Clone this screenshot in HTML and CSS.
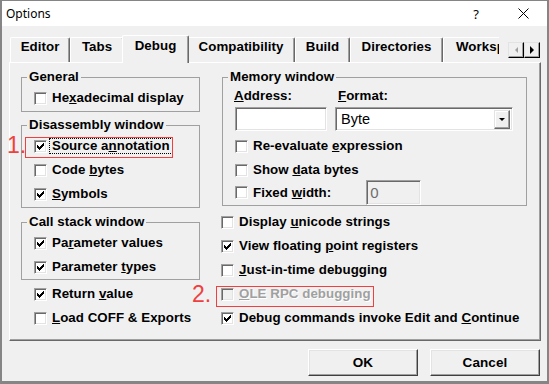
FILE: index.html
```html
<!DOCTYPE html>
<html>
<head>
<meta charset="utf-8">
<title>Options</title>
<link rel="stylesheet" href="styles.css">
</head>
<body>
<div class="dialog">
  <div class="titlebar">
    <span class="title">Options</span>
    <span class="cap-btn help">?</span>
    <span class="cap-btn close"><svg width="11" height="11" viewBox="0 0 11 11"><path d="M0.5 0.5L10.5 10.5M10.5 0.5L0.5 10.5" stroke="#000" stroke-width="1" fill="none"/></svg></span>
  </div>

  <div class="tabrow">
    <div class="tabstrip">
      <div class="tab t-editor">Editor</div>
      <div class="tab t-tabs">Tabs</div>
      <div class="tab t-debug active">Debug</div>
      <div class="tab t-compat">Compatibility</div>
      <div class="tab t-build">Build</div>
      <div class="tab t-dirs">Directories</div>
      <div class="tab t-works">Workspace</div>
    </div>
    <div class="spin">
      <span class="spin-btn"><span class="arrow-left"></span></span>
      <span class="spin-btn"><span class="arrow-right"></span></span>
    </div>
  </div>

  <div class="panel">
    <div class="col col-left">
      <fieldset class="group g-general">
        <legend>General</legend>
        <div class="row"><span class="cb"></span><span class="txt">He<u>x</u>adecimal display</span></div>
      </fieldset>

      <fieldset class="group g-disasm">
        <legend>Disassembly window</legend>
        <div class="row marked">
          <span class="mark-num num-1">1.</span>
          <span class="mark-box box-1"></span>
          <span class="cb checked"><svg class="chk" width="11" height="11" viewBox="0 0 11 11"><path d="M2 4h1v3H2zM3 5h1v3H3zM4 6h1v3H4zM5 5h1v3H5zM6 4h1v3H6zM7 3h1v3H7zM8 2h1v3H8z" fill="#000"/></svg></span>
          <span class="txt focus">Source a<u>n</u>notation</span>
        </div>
        <div class="row"><span class="cb"></span><span class="txt">Code <u>b</u>ytes</span></div>
        <div class="row"><span class="cb checked"><svg class="chk" width="11" height="11" viewBox="0 0 11 11"><path d="M2 4h1v3H2zM3 5h1v3H3zM4 6h1v3H4zM5 5h1v3H5zM6 4h1v3H6zM7 3h1v3H7zM8 2h1v3H8z" fill="#000"/></svg></span><span class="txt"><u>S</u>ymbols</span></div>
      </fieldset>

      <fieldset class="group g-stack">
        <legend>Call stack window</legend>
        <div class="row"><span class="cb checked"><svg class="chk" width="11" height="11" viewBox="0 0 11 11"><path d="M2 4h1v3H2zM3 5h1v3H3zM4 6h1v3H4zM5 5h1v3H5zM6 4h1v3H6zM7 3h1v3H7zM8 2h1v3H8z" fill="#000"/></svg></span><span class="txt">Pa<u>r</u>ameter values</span></div>
        <div class="row"><span class="cb checked"><svg class="chk" width="11" height="11" viewBox="0 0 11 11"><path d="M2 4h1v3H2zM3 5h1v3H3zM4 6h1v3H4zM5 5h1v3H5zM6 4h1v3H6zM7 3h1v3H7zM8 2h1v3H8z" fill="#000"/></svg></span><span class="txt">Parameter <u>t</u>ypes</span></div>
      </fieldset>

      <div class="loose">
        <div class="row"><span class="cb checked"><svg class="chk" width="11" height="11" viewBox="0 0 11 11"><path d="M2 4h1v3H2zM3 5h1v3H3zM4 6h1v3H4zM5 5h1v3H5zM6 4h1v3H6zM7 3h1v3H7zM8 2h1v3H8z" fill="#000"/></svg></span><span class="txt">Return <u>v</u>alue</span></div>
        <div class="row"><span class="cb"></span><span class="txt"><u>L</u>oad COFF &amp; Exports</span></div>
      </div>
    </div>

    <div class="col col-right">
      <fieldset class="group g-memory">
        <legend>Memory window</legend>
        <div class="mem-grid">
          <span class="lbl"><u>A</u>ddress:</span>
          <span class="lbl lbl-format"><u>F</u>ormat:</span>
          <span class="edit"></span>
          <span class="combo"><span class="combo-text">Byte</span><span class="combo-btn"><span class="arrow-down"></span></span></span>
        </div>
        <div class="row r-tight"><span class="cb"></span><span class="txt">Re-evaluate <u>e</u>xpression</span></div>
        <div class="row r-tight"><span class="cb"></span><span class="txt">Show <u>d</u>ata bytes</span></div>
        <div class="row r-fixed"><span class="cb"></span><span class="txt">Fixed <u>w</u>idth:</span><span class="edit edit-disabled">0</span></div>
      </fieldset>

      <div class="loose loose-right">
        <div class="row"><span class="cb"></span><span class="txt">Display <u>u</u>nicode strings</span></div>
        <div class="row"><span class="cb checked"><svg class="chk" width="11" height="11" viewBox="0 0 11 11"><path d="M2 4h1v3H2zM3 5h1v3H3zM4 6h1v3H4zM5 5h1v3H5zM6 4h1v3H6zM7 3h1v3H7zM8 2h1v3H8z" fill="#000"/></svg></span><span class="txt">View floating <u>p</u>oint registers</span></div>
        <div class="row"><span class="cb"></span><span class="txt"><u>J</u>ust-in-time debugging</span></div>
        <div class="row marked">
          <span class="mark-num num-2">2.</span>
          <span class="mark-box box-2"></span>
          <span class="cb disabled"></span><span class="txt txt-disabled"><u>O</u>LE RPC debugging</span>
        </div>
        <div class="row"><span class="cb checked"><svg class="chk" width="11" height="11" viewBox="0 0 11 11"><path d="M2 4h1v3H2zM3 5h1v3H3zM4 6h1v3H4zM5 5h1v3H5zM6 4h1v3H6zM7 3h1v3H7zM8 2h1v3H8z" fill="#000"/></svg></span><span class="txt">Debug commands invoke Edit and <u>C</u>ontinue</span></div>
      </div>
    </div>
  </div>

  <div class="btnrow">
    <button class="btn">OK</button>
    <button class="btn">Cancel</button>
  </div>
</div>
</body>
</html>
```

FILE: styles.css
```css
* { box-sizing: border-box; }

body {
  margin: 0;
  background: #ffffff;
  font-family: "Liberation Sans", Arial, sans-serif;
  color: #000;
}

.dialog {
  width: 549px;
  height: 384px;
  border: 2px solid #858585;
  border-top-width: 1px;
  border-bottom-width: 3px;
  background: #f0f0f0;
  display: flex;
  flex-direction: column;
}

/* ---------- title bar ---------- */
.titlebar {
  flex: none;
  height: 25px;
  background: #ffffff;
  display: flex;
  align-items: center;
  font-family: "Noto Sans", sans-serif;
  font-size: 12px;
}
.title { padding-left: 4px; line-height: 16px; }
.cap-btn {
  height: 25px;
  width: 46px;
  display: flex;
  align-items: center;
  justify-content: center;
}
.help { margin-left: auto; font-size: 13px; }
.close { width: 48px; }

/* ---------- tabs ---------- */
.tabrow {
  flex: none;
  display: flex;
  margin-top: 9px;
  height: 28px;
  position: relative;
  z-index: 2;
}
.tabstrip {
  display: flex;
  align-items: flex-end;
  width: 489px;
  height: 28px;
  margin-left: 8px;
  overflow: hidden;
}
.tab {
  flex: none;
  height: 25px;
  margin-bottom: 1px;
  border-top: 1px solid #ffffff;
  border-left: 1px solid #ffffff;
  border-right: 1px solid #696969;
  box-shadow: inset -1px 0 #a0a0a0;
  border-radius: 2px 2px 0 0;
  background: #f0f0f0;
  font-size: 13.3px;
  font-weight: bold;
  letter-spacing: 0.05px;
  line-height: 14px;
  padding-top: 2px;
  text-align: center;
  white-space: nowrap;
}
.t-editor { width: 60px; }
.t-tabs { width: 54px; }
.t-debug { width: 63px; }
.t-compat { width: 108px; }
.t-build { width: 55px; }
.t-dirs { width: 93px; }
.t-works { width: 80px; text-align: left; padding-left: 12px; }
.tab.active {
  width: 67px;
  height: 28px;
  margin: 0 -2px;
  padding-top: 3px;
  position: relative;
  z-index: 3;
}

.spin {
  display: flex;
  margin-left: 9px;
  margin-top: 7px;
  height: 16px;
}
.spin-btn {
  width: 16px;
  height: 16px;
  border: 1px solid;
  border-color: #e3e3e3 #000 #000 #e3e3e3;
  box-shadow: inset -1px -1px #a0a0a0;
  background: #f0f0f0;
  display: flex;
  align-items: center;
  justify-content: center;
}
.arrow-left {
  width: 0; height: 0;
  border-top: 3px solid transparent;
  border-bottom: 3px solid transparent;
  border-right: 3px solid #a0a0a0;
}
.arrow-right {
  width: 0; height: 0;
  border-top: 4px solid transparent;
  border-bottom: 4px solid transparent;
  border-left: 4px solid #000;
}

/* ---------- panel ---------- */
.panel {
  flex: none;
  margin: -1px 6px 0 7px;
  height: 279px;
  border: 1px solid;
  border-color: #ffffff #696969 #696969 #ffffff;
  box-shadow: inset -1px -1px #a0a0a0;
  padding: 7px 0 0 11px;
  display: grid;
  grid-template-columns: 179px 306px;
  column-gap: 21px;
  align-items: start;
  position: relative;
  z-index: 1;
}
.col { display: flex; flex-direction: column; }

.group {
  margin: 0;
  min-width: 0;
  border: 1px solid #a0a0a0;
  padding: 2px 0 1px 12px;
}
.group legend {
  padding: 0 2px;
  margin-left: -7px;
  font-size: 13.3px;
  font-weight: bold;
  letter-spacing: 0.05px;
  line-height: 14px;
}
.g-disasm { margin-top: 6px; }
.g-stack { margin-top: 7px; padding-bottom: 0; }
.loose { margin-top: 2px; padding-left: 13px; }
.loose-right { margin-top: 4px; padding-left: 0; }
.g-memory { margin-left: 1px; width: 305px; padding: 4px 0 0 12px; }

.row {
  position: relative;
  height: 24px;
  display: flex;
  align-items: center;
}
.r-tight { height: 24px; }
.r-fixed { height: 25px; margin-top: -2px; }

.cb {
  flex: none;
  width: 13px;
  height: 13px;
  border: 1px solid;
  border-color: #a0a0a0 #ffffff #ffffff #a0a0a0;
  box-shadow: inset 1px 1px #696969, inset -1px -1px #e3e3e3;
  background: #ffffff;
  position: relative;
}
.cb.disabled { background: #f0f0f0; }
.chk { display: block; }

.txt {
  margin-left: 2px;
  border: 1px solid transparent;
  padding: 0 2px;
  font-size: 13.3px;
  font-weight: bold;
  letter-spacing: 0.05px;
  line-height: 14px;
  white-space: nowrap;
}
.txt.focus { border: 1px dotted #000; }
.txt-disabled { color: #a0a0a0; text-shadow: 1px 1px 0 #ffffff; }
u { text-underline-offset: 1px; }

/* annotations drawn over the dialog */
.mark-num {
  position: absolute;
  top: 0;
  font-family: "Liberation Sans", Arial, sans-serif;
  font-size: 23px;
  line-height: 23px;
  color: #ef3f3f;
  z-index: 4;
}
.num-1 { left: -27px; }
.num-2 { left: -29px; top: 1px; }
.mark-box {
  position: absolute;
  border: 1px solid #ef3f3f;
  z-index: 4;
  pointer-events: none;
}
.box-1 { left: -9px; top: 3px; width: 148px; height: 21px; }
.box-2 { left: -5px; top: 4px; width: 158px; height: 21px; }

/* memory window inputs */
.mem-grid {
  display: grid;
  grid-template-columns: 92px 178px;
  column-gap: 8px;
  row-gap: 4px;
  margin-bottom: 3px;
}
.lbl {
  font-size: 13.3px;
  font-weight: bold;
  letter-spacing: 0.05px;
  line-height: 15px;
  margin-left: -1px;
}
.lbl-format { margin-left: 3px; }
.edit {
  display: block;
  height: 24px;
  border: 1px solid;
  border-color: #a0a0a0 #ffffff #ffffff #a0a0a0;
  box-shadow: inset 1px 1px #696969, inset -1px -1px #e3e3e3;
  background: #ffffff;
}
.edit-disabled {
  width: 55px;
  height: 25px;
  margin-left: 32px;
  background: #f0f0f0;
  color: #6d6d6d;
  font-size: 15px;
  line-height: 23px;
  padding-left: 3px;
}
.combo {
  height: 24px;
  border: 1px solid;
  border-color: #a0a0a0 #ffffff #ffffff #a0a0a0;
  box-shadow: inset 1px 1px #696969, inset -1px -1px #e3e3e3;
  background: #ffffff;
  display: flex;
  align-items: center;
  padding: 2px 2px 2px 5px;
}
.combo-text {
  flex: 1;
  font-size: 14.5px;
  line-height: 18px;
}
.combo-btn {
  width: 16px;
  height: 19px;
  border: 1px solid;
  border-color: #e3e3e3 #696969 #696969 #e3e3e3;
  box-shadow: inset -1px -1px #a0a0a0, inset 1px 1px #ffffff;
  background: #f0f0f0;
  display: flex;
  align-items: center;
  justify-content: center;
}
.arrow-down {
  width: 0; height: 0;
  border-left: 3px solid transparent;
  border-right: 3px solid transparent;
  border-top: 3px solid #000;
}

/* ---------- buttons ---------- */
.btnrow {
  flex: none;
  display: flex;
  justify-content: flex-end;
  gap: 12px;
  margin-top: 8px;
  padding-right: 7px;
}
.btn {
  width: 110px;
  height: 27px;
  margin: 0;
  padding: 0;
  background: #f0f0f0;
  border: 1px solid;
  border-color: #ffffff #404040 #404040 #ffffff;
  box-shadow: inset -1px -1px #a0a0a0, inset 1px 1px #e3e3e3;
  font-family: "Liberation Sans", Arial, sans-serif;
  font-size: 13.5px;
  font-weight: bold;
  letter-spacing: 0.1px;
  color: #000;
}
```
